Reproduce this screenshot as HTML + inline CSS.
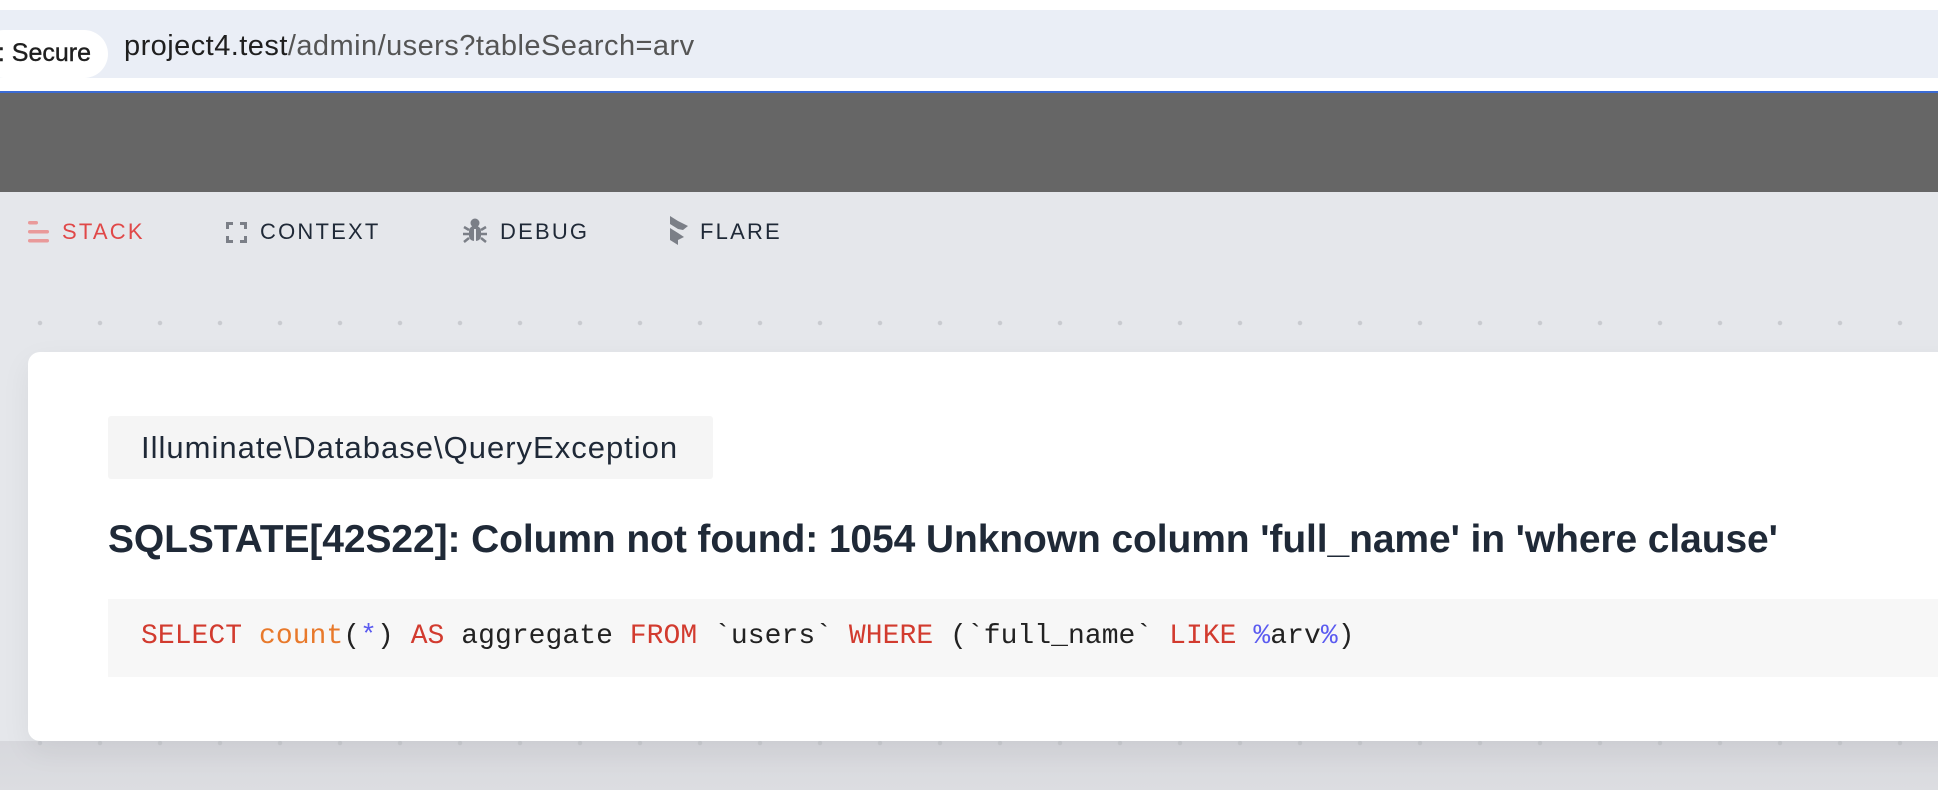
<!DOCTYPE html>
<html><head><style>
*{margin:0;padding:0;box-sizing:border-box}
body{width:1938px;height:790px;overflow:hidden;background:#e5e7eb;font-family:"Liberation Sans",sans-serif;position:relative}
.top{position:absolute;left:0;top:0;width:1938px;height:92px;background:#fff}
.addr{position:absolute;left:0;top:10px;width:1938px;height:68px;background:#eaeef6}
.pill{position:absolute;left:-20px;top:20px;width:128px;height:48px;background:#fff;border-radius:24px}
.pill span{position:absolute;right:17px;top:9px;font-size:25px;color:#1f1f1f;white-space:nowrap;-webkit-text-stroke:.4px #1f1f1f}
.url{position:absolute;left:124px;top:20px;font-size:29px;color:#1f1f1f;letter-spacing:.45px}
.url i{font-style:normal;color:#555}
.blue{position:absolute;left:0;top:91px;width:1938px;height:2px;background:#3b6bd4}
.dark{position:absolute;left:0;top:93px;width:1938px;height:99px;background:#666}
.nav{position:absolute;top:220px;font-size:22px;letter-spacing:2.2px;color:#1f2937;line-height:24px}
.ic{position:absolute}
.dots{position:absolute;left:0;width:1938px;height:6px;background-image:radial-gradient(circle,#c9cbd0 2px,transparent 2.5px);background-size:60px 6px;background-position:10px 0}
.below{position:absolute;left:0;top:741px;width:1938px;height:49px;background:linear-gradient(#d7d8dd,#dcdde1)}
.card{position:absolute;left:28px;top:352px;width:1940px;height:389px;background:#fff;border-radius:12px;box-shadow:0 10px 30px rgba(0,0,0,.06)}
.badge{position:absolute;left:80px;top:64px;width:605px;height:63px;background:#f5f5f5;border-radius:3px}
.badge span{position:absolute;left:33px;top:14px;font-size:31px;color:#1f2937;letter-spacing:1px}
h1{position:absolute;left:80px;top:166px;font-size:39px;font-weight:bold;color:#1f2937;white-space:nowrap;letter-spacing:-.1px}
.code{position:absolute;left:80px;top:247px;width:1900px;height:78px;background:#f7f7f7}
.code pre{position:absolute;left:33px;top:22px;font-family:"Liberation Mono",monospace;font-size:28px;color:#222;letter-spacing:.05px}
.r{color:#d23b2f}.o{color:#e8792b}.b{color:#5b5bf0}
</style></head><body>
<div class="top"></div>
<div class="addr"><div class="pill"><span>: Secure</span></div><div class="url">project4.test<i>/admin/users?tableSearch=arv</i></div></div>
<div class="blue"></div>
<div class="dark"></div>
<svg class="ic" style="left:28px;top:220px" width="22" height="24" viewBox="0 0 22 24"><g fill="#e99a9a"><rect x="0" y="1" width="10" height="3.5" rx="1.7"/><rect x="0" y="10" width="21" height="3.5" rx="1.7"/><rect x="0" y="19" width="21" height="3.5" rx="1.7"/></g></svg>
<div class="nav" style="left:62px;color:#e04848">STACK</div>
<svg class="ic" style="left:226px;top:222px" width="21" height="21" viewBox="0 0 21 21" fill="none" stroke="#7b7f87" stroke-width="3"><path d="M1.5 7V1.5H7M14 1.5h5.5V7M19.5 14v5.5H14M7 19.5H1.5V14"/></svg>
<div class="nav" style="left:260px">CONTEXT</div>
<svg class="ic" style="left:463px;top:218px" width="24" height="26" viewBox="0 0 24 26" fill="#7b7f87"><circle cx="12" cy="5" r="4.5"/><rect x="6" y="8" width="12" height="15" rx="5"/><path d="M1 9l5 3M23 9l-5 3M0 16h6M24 16h-6M1 24l5-4M23 24l-5-4" stroke="#7b7f87" stroke-width="2.5"/><rect x="11" y="11" width="2" height="12" fill="#e5e7eb"/></svg>
<div class="nav" style="left:500px">DEBUG</div>
<svg class="ic" style="left:669px;top:216px" width="20" height="30" viewBox="0 0 20 30" fill="#7b7f87"><path d="M1 0l8 5v8L1 8z"/><path d="M9 5l10 5-5 4-5-1z"/><path d="M1 12l8 5v12L1 24z"/><path d="M9 17l6 4-6 3z"/></svg>
<div class="nav" style="left:700px">FLARE</div>
<div class="dots" style="top:320px"></div>
<div class="below"></div>
<div class="dots" style="top:740px"></div>
<div class="card">
<div class="badge"><span>Illuminate\Database\QueryException</span></div>
<h1>SQLSTATE[42S22]: Column not found: 1054 Unknown column 'full_name' in 'where clause'</h1>
<div class="code"><pre><span class="r">SELECT</span> <span class="o">count</span>(<span class="b">*</span>) <span class="r">AS</span> aggregate <span class="r">FROM</span> `users` <span class="r">WHERE</span> (`full_name` <span class="r">LIKE</span> <span class="b">%</span>arv<span class="b">%</span>)</pre></div>
</div>
</body></html>
